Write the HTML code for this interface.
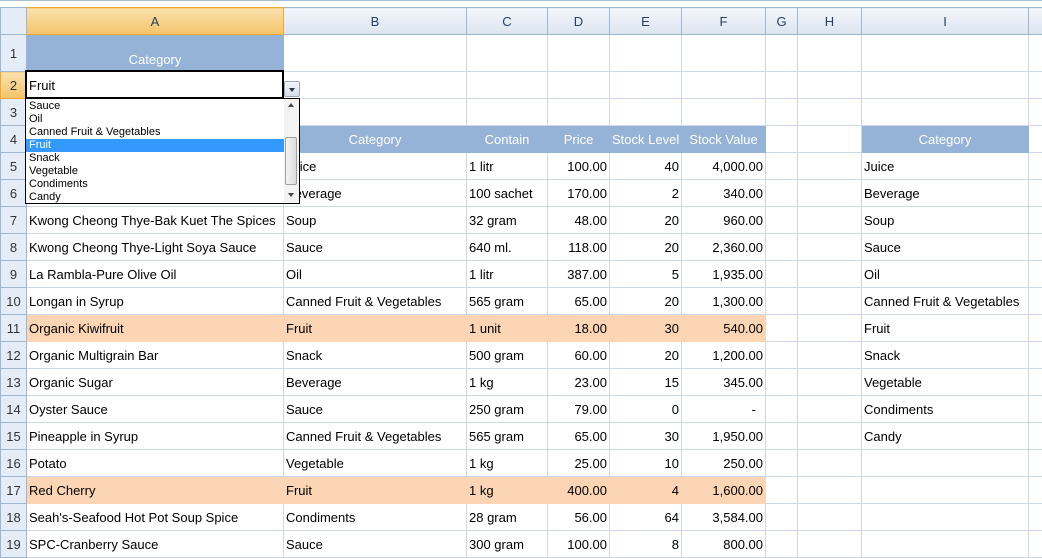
<!DOCTYPE html>
<html><head><meta charset="utf-8"><style>
*{margin:0;padding:0;box-sizing:border-box}
body{width:1042px;height:547px;overflow:hidden;background:#fff;font-family:"Liberation Sans",Arial,sans-serif;font-size:13px;color:#000;position:relative}
.top{position:absolute;left:0;top:0;width:1042px;height:8px;background:#fff;border-top:1px solid #a8bcd4;border-bottom:1px solid #8aa4c4}
table{position:absolute;left:0;top:7px;border-collapse:collapse;table-layout:fixed;width:1048px}
td{border:1px solid #d0d7e5;height:27px;padding:0 2px;white-space:nowrap;overflow:hidden;vertical-align:middle}
td.h{background:linear-gradient(#f3f6fb,#dbe4f0);border:1px solid #9eb6ce;text-align:center;color:#27415f;font-size:13px}
td.hs{background:linear-gradient(#fae0ad,#f3c46b);border:1px solid #f0a830;text-align:center;color:#27415f}
td.rh{background:#e4ecf7;border:1px solid #9eb6ce;text-align:center;color:#333;font-size:13px}
td.rhs{background:linear-gradient(#fae0ad,#f3c46b);border:1px solid #f0a830;text-align:center;color:#333}
td.b{background:#95b3d7;color:#fff;text-align:center;border-color:#95b3d7}
td.r{text-align:right}
tr.o td:not(.rh){background:#fcd5b4;border-color:#fcd5b4}
tr.o td.x{background:#fff;border-color:#d0d7e5}
.act{position:absolute;left:25px;top:70px;width:259px;height:29px;border:2px solid #000}
.btn{position:absolute;left:284px;top:81px;width:16px;height:16px;border:1px solid #9aa8bc;background:linear-gradient(#f4f7fb,#d6dde8);border-radius:2px}
.btn:after{content:"";position:absolute;left:4px;top:6px;border-left:3px solid transparent;border-right:3px solid transparent;border-top:4px solid #334}
.list{position:absolute;left:25px;top:98px;width:275px;height:106px;background:#fff;border:1px solid #000;font-size:11px;line-height:13px;padding-top:1px}
.list .it{padding-left:3px;width:258px;height:13px}
.list .sel{background:#3399ff;color:#fff}
.sb{position:absolute;right:0;top:0;width:15px;height:104px;background:#f3f3f3}
.th{position:absolute;left:1px;top:38px;width:12px;height:48px;border:1px solid #a0a0a0;border-radius:2px;background:linear-gradient(90deg,#f4f4f4,#dcdcdc)}
</style></head><body>
<div class="top"></div>
<table>
<colgroup><col style="width:26px"><col style="width:257px"><col style="width:183px"><col style="width:81px"><col style="width:62px"><col style="width:72px"><col style="width:84px"><col style="width:32px"><col style="width:64px"><col style="width:167px"><col style="width:20px"></colgroup>
<tr><td class="h" style="background:#e4ecf7"></td><td class="hs">A</td><td class="h">B</td><td class="h">C</td><td class="h">D</td><td class="h">E</td><td class="h">F</td><td class="h">G</td><td class="h">H</td><td class="h">I</td><td class="h"></td></tr>
<tr style="height:37px"><td class="rh" style="height:37px">1</td><td class="b" style="height:37px;vertical-align:bottom;padding-bottom:4px">Category</td><td></td><td></td><td></td><td></td><td></td><td></td><td></td><td></td><td></td></tr>
<tr><td class="rhs">2</td><td>Fruit</td><td></td><td></td><td></td><td></td><td></td><td></td><td></td><td></td><td></td></tr>
<tr><td class="rh">3</td><td></td><td></td><td></td><td></td><td></td><td></td><td></td><td></td><td></td><td></td></tr>
<tr><td class="rh">4</td><td class="b"></td><td class="b">Category</td><td class="b">Contain</td><td class="b">Price</td><td class="b">Stock Level</td><td class="b">Stock Value</td><td></td><td></td><td class="b">Category</td><td></td></tr>
<tr><td class="rh">5</td><td></td><td>Juice</td><td>1 litr</td><td class="r">100.00</td><td class="r">40</td><td class="r">4,000.00</td><td></td><td></td><td>Juice</td><td></td></tr>
<tr><td class="rh">6</td><td></td><td>Beverage</td><td>100 sachet</td><td class="r">170.00</td><td class="r">2</td><td class="r">340.00</td><td></td><td></td><td>Beverage</td><td></td></tr>
<tr><td class="rh">7</td><td>Kwong Cheong Thye-Bak Kuet The Spices</td><td>Soup</td><td>32 gram</td><td class="r">48.00</td><td class="r">20</td><td class="r">960.00</td><td></td><td></td><td>Soup</td><td></td></tr>
<tr><td class="rh">8</td><td>Kwong Cheong Thye-Light Soya Sauce</td><td>Sauce</td><td>640 ml.</td><td class="r">118.00</td><td class="r">20</td><td class="r">2,360.00</td><td></td><td></td><td>Sauce</td><td></td></tr>
<tr><td class="rh">9</td><td>La Rambla-Pure Olive Oil</td><td>Oil</td><td>1 litr</td><td class="r">387.00</td><td class="r">5</td><td class="r">1,935.00</td><td></td><td></td><td>Oil</td><td></td></tr>
<tr><td class="rh">10</td><td>Longan in Syrup</td><td>Canned Fruit &amp; Vegetables</td><td>565 gram</td><td class="r">65.00</td><td class="r">20</td><td class="r">1,300.00</td><td></td><td></td><td>Canned Fruit &amp; Vegetables</td><td></td></tr>
<tr class="o"><td class="rh">11</td><td>Organic Kiwifruit</td><td>Fruit</td><td>1 unit</td><td class="r">18.00</td><td class="r">30</td><td class="r">540.00</td><td class="x"></td><td class="x"></td><td class="x">Fruit</td><td class="x"></td></tr>
<tr><td class="rh">12</td><td>Organic Multigrain Bar</td><td>Snack</td><td>500 gram</td><td class="r">60.00</td><td class="r">20</td><td class="r">1,200.00</td><td></td><td></td><td>Snack</td><td></td></tr>
<tr><td class="rh">13</td><td>Organic Sugar</td><td>Beverage</td><td>1 kg</td><td class="r">23.00</td><td class="r">15</td><td class="r">345.00</td><td></td><td></td><td>Vegetable</td><td></td></tr>
<tr><td class="rh">14</td><td>Oyster Sauce</td><td>Sauce</td><td>250 gram</td><td class="r">79.00</td><td class="r">0</td><td class="r">-&nbsp;&nbsp;</td><td></td><td></td><td>Condiments</td><td></td></tr>
<tr><td class="rh">15</td><td>Pineapple in Syrup</td><td>Canned Fruit &amp; Vegetables</td><td>565 gram</td><td class="r">65.00</td><td class="r">30</td><td class="r">1,950.00</td><td></td><td></td><td>Candy</td><td></td></tr>
<tr><td class="rh">16</td><td>Potato</td><td>Vegetable</td><td>1 kg</td><td class="r">25.00</td><td class="r">10</td><td class="r">250.00</td><td></td><td></td><td></td><td></td></tr>
<tr class="o"><td class="rh">17</td><td>Red Cherry</td><td>Fruit</td><td>1 kg</td><td class="r">400.00</td><td class="r">4</td><td class="r">1,600.00</td><td class="x"></td><td class="x"></td><td class="x"></td><td class="x"></td></tr>
<tr><td class="rh">18</td><td>Seah's-Seafood Hot Pot Soup Spice</td><td>Condiments</td><td>28 gram</td><td class="r">56.00</td><td class="r">64</td><td class="r">3,584.00</td><td></td><td></td><td></td><td></td></tr>
<tr><td class="rh">19</td><td>SPC-Cranberry Sauce</td><td>Sauce</td><td>300 gram</td><td class="r">100.00</td><td class="r">8</td><td class="r">800.00</td><td></td><td></td><td></td><td></td></tr>
</table>
<div class="act"></div>
<div class="btn"></div>
<div class="list">
<div class="it">Sauce</div><div class="it">Oil</div><div class="it">Canned Fruit &amp; Vegetables</div><div class="it sel">Fruit</div><div class="it">Snack</div><div class="it">Vegetable</div><div class="it">Condiments</div><div class="it">Candy</div>
<div class="sb"><span style="position:absolute;left:4px;top:4px;border-left:3px solid transparent;border-right:3px solid transparent;border-bottom:4px solid #444"></span><div class="th"></div><span style="position:absolute;left:4px;top:94px;border-left:3px solid transparent;border-right:3px solid transparent;border-top:4px solid #444"></span></div>
</div>
</body></html>
